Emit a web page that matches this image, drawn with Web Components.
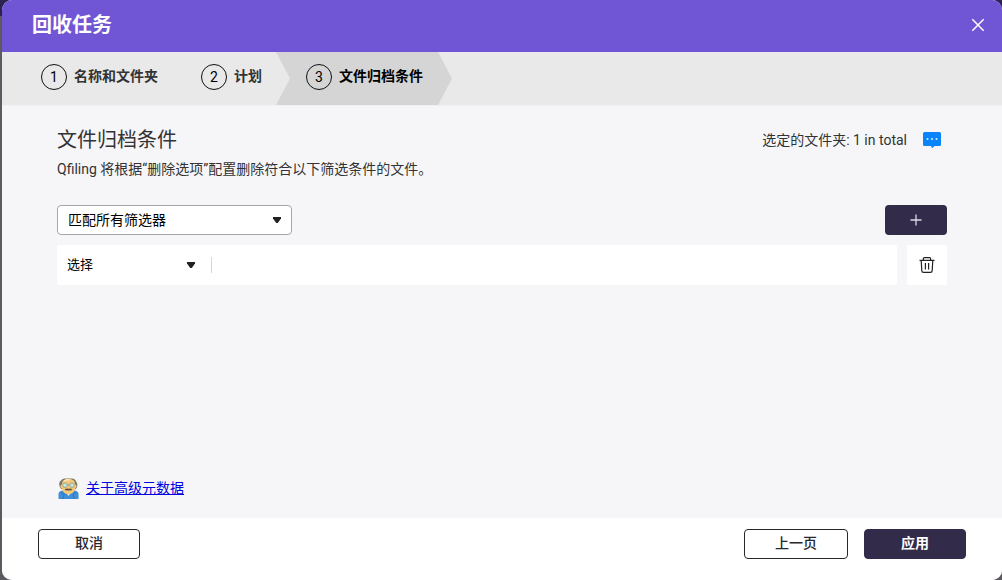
<!DOCTYPE html>
<html lang="zh-CN">
<head>
<meta charset="utf-8">
<meta name="viewport" content="width=device-width, initial-scale=1">
<title>回收任务</title>
<style>
  html, body { height: 100%; }
  body {
    margin: 0;
    background: linear-gradient(#2d2353 0 16px, #5c5a60 16px);
    font: 14px/20px Roboto, "Noto Sans CJK SC", sans-serif;
    color: #333;
  }
</style>
</head>
<body>
<task-dialog heading="回收任务">
  <step-bar slot="steps">
    <step-item number="1">名称和文件夹</step-item>
    <step-item number="2">计划</step-item>
    <step-item number="3" current>文件归档条件</step-item>
  </step-bar>
  <criteria-panel></criteria-panel>
  <action-button slot="cancel">取消</action-button>
  <action-button slot="actions" wide>上一页</action-button>
  <action-button slot="actions" primary>应用</action-button>
</task-dialog>

<script>
class Base extends HTMLElement {
  constructor() {
    super();
    this.attachShadow({ mode: 'open' });
  }
  connectedCallback() {
    this.shadowRoot.innerHTML = '<style>*{box-sizing:border-box}</style>' + this.render();
  }
}

customElements.define('task-dialog', class extends Base {
  render() {
    return `
    <style>
      :host { display: block; height: 100%; padding-left: 2px; box-sizing: border-box; }
      section { display: flex; flex-direction: column; height: 100%; background: #fff; border-radius: 10px; overflow: hidden; }
      header { display: flex; align-items: center; justify-content: space-between; height: 52px; padding: 0 16px 2px 30px; background: #7056d4; color: #fff; flex: none; }
      h1 { margin: 0; font-size: 20px; line-height: 28px; font-weight: 700; }
      header button { display: flex; padding: 0; border: 0; background: none; color: #fff; cursor: pointer; }
      main { flex: 1; min-height: 0; display: flex; background: #f6f6f9; }
      footer { display: flex; justify-content: space-between; padding: 11px 36px 21px; background: #fff; flex: none; }
      .right { display: flex; gap: 16px; }
    </style>
    <section role="dialog" aria-labelledby="title">
      <header>
        <h1 id="title">${this.getAttribute('heading')}</h1>
        <button type="button" aria-label="关闭">
          <svg width="16" height="16" viewBox="0 0 16 16" fill="none" stroke="currentColor" stroke-width="1.5"><path d="M2.3 2.3l11.4 11.4M13.7 2.3L2.3 13.7"/></svg>
        </button>
      </header>
      <slot name="steps"></slot>
      <main><slot></slot></main>
      <footer>
        <slot name="cancel"></slot>
        <div class="right"><slot name="actions"></slot></div>
      </footer>
    </section>`;
  }
});

customElements.define('step-bar', class extends Base {
  render() {
    return `
    <style>
      :host { display: flex; flex: none; height: 54px; padding-left: 25px; background: #e9e9e9; border-bottom: 1px solid #f1f1f1; box-sizing: border-box; }
    </style>
    <slot></slot>`;
  }
});

customElements.define('step-item', class extends Base {
  render() {
    return `
    <style>
      :host { display: flex; align-items: center; gap: 7px; padding: 0 29px 3px 14px; box-sizing: border-box; font-weight: 700; color: #333; }
      :host([current]) { padding-left: 30px; margin-left: -15px; background: #d5d5d5; color: #000; clip-path: polygon(0 0, calc(100% - 14px) 0, 100% 50%, calc(100% - 14px) 100%, 0 100%, 14px 50%); }
      .num { display: flex; align-items: center; justify-content: center; width: 26px; height: 26px; border: 1px solid #111; border-radius: 50%; font-weight: 400; color: #000; }
      .label { padding-bottom: 2px; }
    </style>
    <span class="num">${this.getAttribute('number')}</span><span class="label"><slot></slot></span>`;
  }
});

customElements.define('action-button', class extends Base {
  render() {
    return `
    <style>
      :host { display: block; }
      button { display: block; width: 102px; height: 30px; padding: 0 0 2px; border: 1px solid #28272e; border-radius: 4px; background: #fff; color: #28272e; font: inherit; font-weight: 500; cursor: pointer; }
      :host([wide]) button { width: 104px; }
      :host([primary]) button { background: #322c4a; border-color: #322c4a; color: #fff; font-weight: 700; }
    </style>
    <button type="button"><slot></slot></button>`;
  }
});

customElements.define('drop-down', class extends Base {
  render() {
    return `
    <style>
      :host { display: grid; align-items: center; box-sizing: border-box; }
      select, svg { grid-area: 1 / 1; }
      select { appearance: none; width: 100%; height: 30px; margin: 0; padding: 0 24px 0 10px; border: 1px solid #a6a6a8; border-radius: 4px; background: #fff; color: #000; font: inherit; }
      :host([plain]) select { padding-left: 9px; border-color: transparent; background: none; font-size: 13px; }
      svg { justify-self: end; margin-right: 10px; pointer-events: none; }
    </style>
    <select aria-label="${this.getAttribute('label')}"><option>${this.getAttribute('value')}</option></select>
    <svg width="10" height="8" viewBox="0 0 10 8"><path d="M1 1h8v1.5L5.8 7H4.2L1 2.5z" fill="#222"/></svg>`;
  }
});

customElements.define('filter-row', class extends Base {
  render() {
    return `
    <style>
      :host { display: flex; gap: 10px; }
      .filter { flex: 1; display: flex; align-items: center; height: 40px; background: #fff; border-radius: 2px; }
      drop-down { width: 149px; }
      .line { width: 1px; height: 16px; margin-left: 5px; background: #d6d6da; }
      button { display: flex; align-items: center; justify-content: center; width: 40px; height: 40px; padding: 0; border: 0; border-radius: 2px; background: #fff; cursor: pointer; }
    </style>
    <div class="filter"><drop-down plain label="筛选器" value="选择"></drop-down><span class="line"></span></div>
    <button type="button" aria-label="删除">
      <svg width="16" height="18" viewBox="0 0 16 18" fill="none" stroke="#222" stroke-width="1.2"><path d="M.5 4.3h15M4.4 4V2.6q0-1 1-1h5.2q1 0 1 1V4M2.2 4.3l.6 10.3q.1 1.8 1.8 1.8h6.8q1.7 0 1.8-1.8l.6-10.3M6.4 7v6.6M9.6 7v6.6"/></svg>
    </button>`;
  }
});

customElements.define('criteria-panel', class extends Base {
  render() {
    return `
    <style>
      :host { flex: 1; display: flex; flex-direction: column; padding: 20px 55px; box-sizing: border-box; }
      .top { display: flex; justify-content: space-between; }
      h2 { margin: 0; font-size: 20px; line-height: 28px; font-weight: 400; }
      p { margin: 0; line-height: 30px; }
      .total { display: flex; align-items: center; gap: 16px; height: 28px; padding-right: 6px; }
      .tools { display: flex; justify-content: space-between; margin: 21px 0 10px; }
      .tools drop-down { width: 235px; }
      .add { display: flex; align-items: center; justify-content: center; width: 62px; height: 30px; padding: 0; border: 0; border-radius: 4px; background: #322c4a; cursor: pointer; }
      .about { display: flex; align-items: center; gap: 6px; margin: auto 0 -1px; }
      a { color: #0000e0; text-decoration: underline; }
      svg { flex: none; }
    </style>
    <div class="top">
      <div>
        <h2>文件归档条件</h2>
        <p>Qfiling 将根据“删除选项”配置删除符合以下筛选条件的文件。</p>
      </div>
      <div class="total">
        <span>选定的文件夹: 1 in total</span>
        <svg width="18" height="18" viewBox="0 0 18 18"><path d="M1.5 1h15Q18 1 18 2.500v11Q18 15 16.500 15H11.500L9 17.200 8 15H1.500Q0 15 0 13.500v-11Q0 1 1.500 1z" fill="#0a84fa"/><g fill="#d9f1ff"><circle cx="4.500" cy="8" r="1"/><circle cx="9" cy="8" r="1"/><circle cx="13.500" cy="8" r="1"/></g></svg>
      </div>
    </div>
    <div class="tools">
      <drop-down label="匹配方式" value="匹配所有筛选器"></drop-down>
      <button class="add" type="button" aria-label="添加"><svg width="12" height="12" viewBox="0 0 12 12" stroke="#ddd9e8" stroke-width="1.300"><path d="M6 .5v11M.5 6h11"/></svg></button>
    </div>
    <filter-row></filter-row>
    <div class="about">
      <svg width="23" height="22" viewBox="0 0 23 22">
        <path d="M1.500 22v-5q0-3 4-3.500h12q4 .5 4 3.500v5z" fill="#3f8ed8"/>
        <path d="M8 14l3.500 5 3.500-5z" fill="#eef3f5"/>
        <path d="M2.500 9Q1.500 5 4 3.500 5.500 1 9 1.500h6q3 0 4 3 2 2 1 6l-2 2-14-.5z" fill="#77756c"/>
        <path d="M4.800 7.500Q5 2 11.500 1.800 18 2 18.200 7.500q2 .5 1.300 2.500l-1.300 1.600q-1 5.400-6.700 5.600-5.700-.2-6.700-5.600L3.500 10q-.5-2 1.300-2.500z" fill="#f7c878"/>
        <path d="M7 4.500Q9 2 12.500 3" fill="none" stroke="#ffe6b3" stroke-width="1.500"/>
        <g fill="#c4e6df" stroke="#8b9a88" stroke-width=".8"><circle cx="8" cy="8.200" r="2.300"/><circle cx="15" cy="8.200" r="2.300"/><path d="M10.300 8h2.400"/></g>
        <path d="M7.500 13q1.500-2 4-1.200 2.500-.8 4 1.200-4 1-8 0z" fill="#67513f"/>
        <path d="M4 15l3 2-1 5M19 15l-3 2 1 5" fill="none" stroke="#2f78c0"/>
      </svg>
      <a href="#metadata">关于高级元数据</a>
    </div>`;
  }
});
</script>
</body>
</html>
